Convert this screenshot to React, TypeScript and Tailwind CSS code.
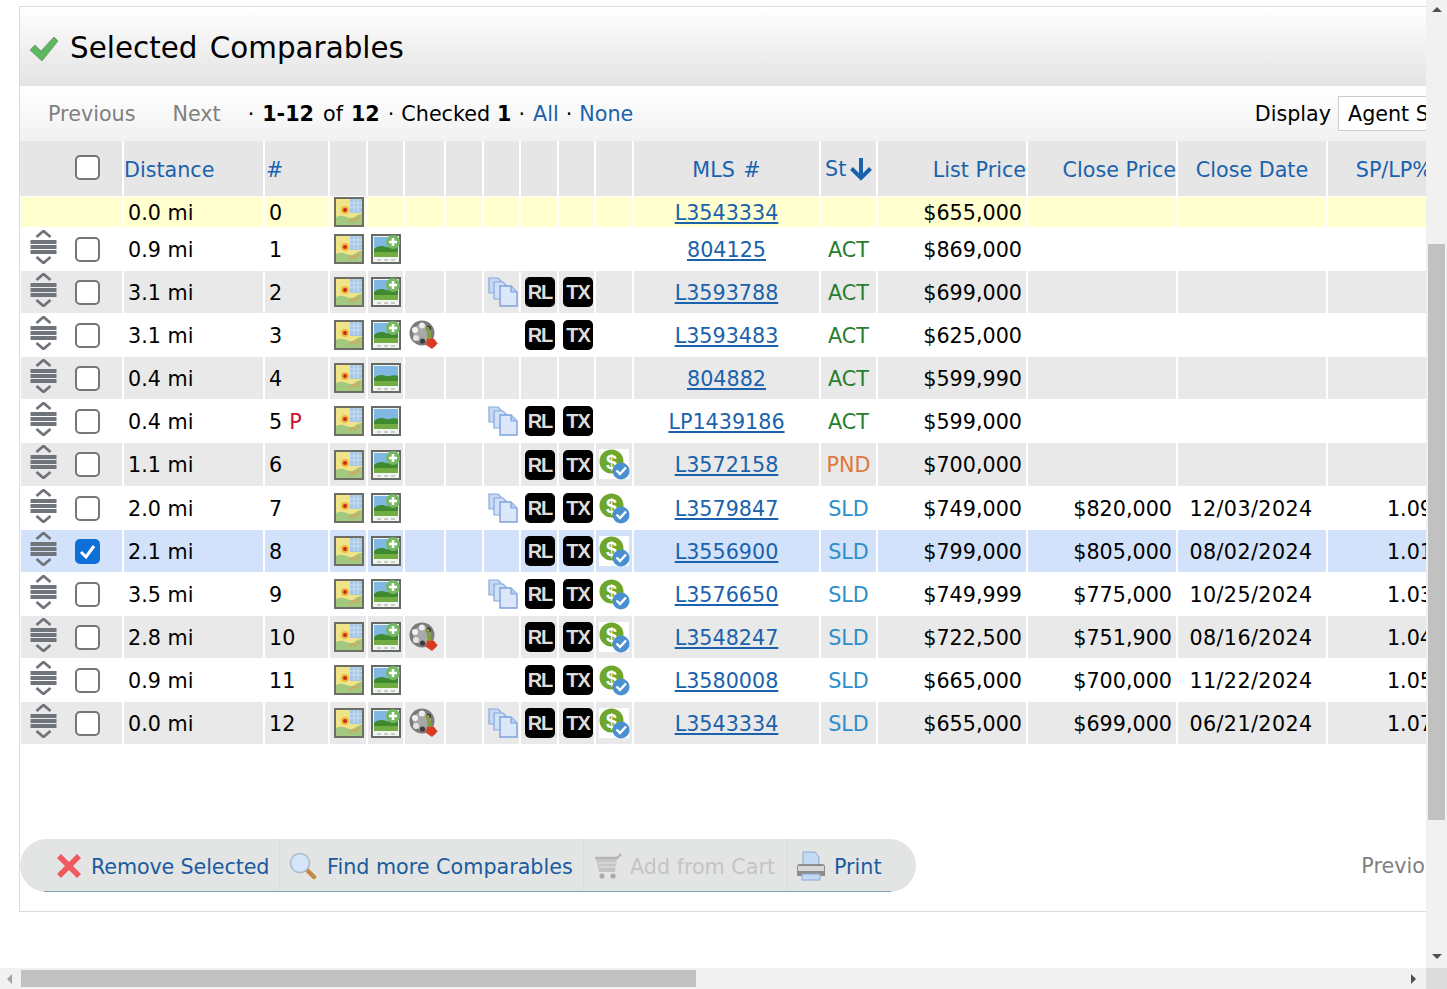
const cols = "grid grid-cols-[102px_139px_63px_36px_35px_39px_36px_35px_36px_35px_36px_185px_55px_148px_148px_148px_112px_80px] gap-x-[2px]";

const PhotoIcon = () => (
  <svg width="30" height="30" viewBox="0 0 30 30" className="block">
    <rect x="1" y="1" width="28" height="28" fill="#f0e488" stroke="#6e6e64" strokeWidth="2" />
    <rect x="16" y="2" width="12" height="14" fill="#a5c8e8" />
    <path d="M16 6h12M16 10h12M20 2v13M24 2v13" stroke="#cfe0ef" strokeWidth="1" />
    <path d="M2 20c6-3 10 0 14 1s8-5 12-4v11H2z" fill="#a3c980" />
    <path d="M15 25l4-3 2 2 3-4 2 2" stroke="#d9a25a" strokeWidth="1.5" fill="none" />
    <circle cx="11" cy="13" r="4" fill="#f2b53a" />
    <circle cx="11" cy="13" r="2" fill="#c02a1c" />
  </svg>
);

const LandscapeIcon = ({ plus }: { plus?: boolean }) => (
  <svg width="30" height="30" viewBox="0 0 30 30" className="block">
    <rect x="1" y="1" width="28" height="28" fill="#f1f5ef" stroke="#666a66" strokeWidth="2" />
    <rect x="3" y="3" width="24" height="12" fill="#7fb8e2" />
    <path d="M3 15c5-4 9-3 12-2s7-2 12 0v10H3z" fill="#3f8a2e" />
    <rect x="3" y="18" width="24" height="5" fill="#72ad44" />
    <path d="M6 26h4M13 26h4M20 26h4" stroke="#a0a8a0" strokeWidth="1" />
    {plus && (
      <>
        <circle cx="22" cy="8" r="7" fill="#74b862" />
        <path d="M22 4v8M18 8h8" stroke="#fff" strokeWidth="2.6" />
      </>
    )}
  </svg>
);

const FilmIcon = () => (
  <svg width="31" height="30" viewBox="0 0 31 30" className="block">
    <circle cx="13" cy="13" r="12.5" fill="#7b7b7b" />
    <circle cx="13" cy="13" r="9" fill="#a8a8a8" />
    <circle cx="13" cy="5.5" r="3" fill="#ececec" />
    <circle cx="6" cy="10" r="3" fill="#f2f2f2" />
    <circle cx="7" cy="18" r="3" fill="#e4e4e4" />
    <circle cx="13.5" cy="21" r="2.6" fill="#3c3c3c" />
    <circle cx="19.5" cy="8" r="2.6" fill="#3c3c3c" />
    <path d="M17 7l2 13 4-1-3-12z" fill="#84a03c" />
    <path d="M18 18l11 5-6 6-6-4z" fill="#e2412a" />
    <circle cx="23" cy="23" r="4.4" fill="#d93a22" />
  </svg>
);

const DocsIcon = () => (
  <svg width="31" height="30" viewBox="0 0 31 30" className="block">
    <path d="M1 1h9l3 3v12H1z" fill="#c5d9f5" stroke="#86a9dd" strokeWidth="1.2" />
    <path d="M6 5h9l4 4v13H6z" fill="#cfe0f7" stroke="#86a9dd" strokeWidth="1.2" />
    <path d="M12 9h11l6 6v14H12z" fill="#dce8fa" stroke="#7ba2dc" strokeWidth="1.4" />
    <path d="M23 9v6h6" fill="#b4cdf0" stroke="#7ba2dc" strokeWidth="1.2" />
  </svg>
);

const Badge = ({ text }: { text: string }) => (
  <div className="flex h-[30px] w-[30px] items-center justify-center rounded-[5px] bg-black text-[20px] font-bold leading-none tracking-[-1px] text-[#dddddd] [font-family:'Liberation_Sans',sans-serif]">
    {text}
  </div>
);

const DollarIcon = () => (
  <svg width="31" height="31" viewBox="0 0 31 31" className="block">
    <rect x="0" y="0" width="30" height="30" fill="#fff" />
    <circle cx="12.5" cy="12.5" r="12" fill="#6ea72c" />
    <text x="12.5" y="19.5" textAnchor="middle" fontSize="20" fontWeight="700" fill="#fff" fontFamily="Liberation Sans, sans-serif">$</text>
    <circle cx="22" cy="22" r="8.5" fill="#4a90d0" />
    <path d="M17.5 21.5l3.5 3.5 6-6.5" fill="none" stroke="#fff" strokeWidth="2.4" />
  </svg>
);

const DragIcon = () => (
  <svg width="27" height="34" viewBox="0 0 27 34" className="block">
    <path d="M6.5 7l7-6 7 6" fill="none" stroke="#6f747a" strokeWidth="2.8" />
    <rect x="0.5" y="10" width="26" height="4" fill="#70757b" />
    <rect x="0.5" y="15" width="26" height="4" fill="#70757b" />
    <rect x="0.5" y="20" width="26" height="4" fill="#70757b" />
    <path d="M6.5 27l7 6 7-6" fill="none" stroke="#6f747a" strokeWidth="2.8" />
  </svg>
);

const SortArrow = () => (
  <svg width="24" height="24" viewBox="0 0 24 24" className="-mt-[2px] ml-[3px] block">
    <path d="M12 1v20M2.5 11.5l9.5 9.5 9.5-9.5" fill="none" stroke="#1a62ad" strokeWidth="4" />
  </svg>
);

const Checkbox = ({ checked }: { checked?: boolean }) => (
  <span className="relative block h-[25px] w-[25px]">
    <input
      type="checkbox"
      checked={!!checked}
      readOnly
      className="block h-[25px] w-[25px] appearance-none rounded-[5px] border-2 border-[#767676] bg-white checked:border-[#0d6fd8] checked:bg-[#0d6fd8]"
    />
    {checked && (
      <svg width="25" height="25" viewBox="0 0 25 25" className="absolute left-0 top-0">
        <path d="M6 13l5 5 8-11" fill="none" stroke="#fff" strokeWidth="3" />
      </svg>
    )}
  </span>
);

const rows = [
  { d: "0.9 mi", n: "1", plus: true, mls: "804125", st: "ACT", list: "$869,000" },
  { d: "3.1 mi", n: "2", plus: true, docs: true, badges: true, mls: "L3593788", st: "ACT", list: "$699,000" },
  { d: "3.1 mi", n: "3", plus: true, film: true, badges: true, mls: "L3593483", st: "ACT", list: "$625,000" },
  { d: "0.4 mi", n: "4", mls: "804882", st: "ACT", list: "$599,990" },
  { d: "0.4 mi", n: "5", p: true, docs: true, badges: true, mls: "LP1439186", st: "ACT", list: "$599,000" },
  { d: "1.1 mi", n: "6", plus: true, badges: true, money: true, mls: "L3572158", st: "PND", list: "$700,000" },
  { d: "2.0 mi", n: "7", plus: true, docs: true, badges: true, money: true, mls: "L3579847", st: "SLD", list: "$749,000", close: "$820,000", date: "12/03/2024", sp: "1.09" },
  { d: "2.1 mi", n: "8", plus: true, badges: true, money: true, checked: true, mls: "L3556900", st: "SLD", list: "$799,000", close: "$805,000", date: "08/02/2024", sp: "1.01" },
  { d: "3.5 mi", n: "9", plus: true, docs: true, badges: true, money: true, mls: "L3576650", st: "SLD", list: "$749,999", close: "$775,000", date: "10/25/2024", sp: "1.03" },
  { d: "2.8 mi", n: "10", plus: true, film: true, badges: true, money: true, mls: "L3548247", st: "SLD", list: "$722,500", close: "$751,900", date: "08/16/2024", sp: "1.04" },
  { d: "0.9 mi", n: "11", plus: true, badges: true, money: true, mls: "L3580008", st: "SLD", list: "$665,000", close: "$700,000", date: "11/22/2024", sp: "1.05" },
  { d: "0.0 mi", n: "12", plus: true, film: true, docs: true, badges: true, money: true, mls: "L3543334", st: "SLD", list: "$655,000", close: "$699,000", date: "06/21/2024", sp: "1.07" },
];

type Row = (typeof rows)[number] & { p?: boolean; film?: boolean; docs?: boolean; badges?: boolean; money?: boolean; checked?: boolean; close?: string; date?: string; sp?: string };

const stColor: Record<string, string> = {
  ACT: "text-[#2a7d2e]",
  PND: "text-[#e0763a]",
  SLD: "text-[#2b8fc9]",
};

const DataRow = ({ row, index }: { row: Row; index: number }) => {
  const bg = row.checked ? "bg-[#d3e2fb]" : index % 2 === 0 ? "bg-white" : "bg-[#e9e9e9]";
  const h = row.n === "6" ? "h-[43px]" : "h-[42px]";
  const cell = `${bg} ${h} flex items-center pt-[2px]`;
  const icon = `${bg} ${h} flex items-center pl-[4px]`;
  return (
    <div className={cols}>
      <div className={`${bg} ${h} ml-[1px] flex items-center pl-[9px]`}>
        <div className="-mt-[5px]"><DragIcon /></div>
        <div className="ml-[18px]"><Checkbox checked={row.checked} /></div>
      </div>
      <div className={`${cell} pl-[4px]`}>{row.d}</div>
      <div className={`${cell} pl-[4px]`}>
        {row.n}
        {row.p && <span className="ml-[7px] text-[#c8102e]">P</span>}
      </div>
      <div className={icon}><PhotoIcon /></div>
      <div className={`${bg} ${h} flex items-center pl-[3px]`}><LandscapeIcon plus={row.plus} /></div>
      <div className={icon}>{row.film && <FilmIcon />}</div>
      <div className={icon} />
      <div className={icon}>{row.docs && <DocsIcon />}</div>
      <div className={icon}>{row.badges && <Badge text="RL" />}</div>
      <div className={icon}>{row.badges && <Badge text="TX" />}</div>
      <div className={`${bg} ${h} flex items-center pl-[3px]`}>{row.money && <DollarIcon />}</div>
      <div className={`${cell} justify-center`}>
        <span className="text-[#1a62ad] underline">{row.mls}</span>
      </div>
      <div className={`${cell} justify-center ${stColor[row.st]}`}>{row.st}</div>
      <div className={`${cell} justify-end pr-[4px]`}>{row.list}</div>
      <div className={`${cell} justify-end pr-[4px]`}>{row.close}</div>
      <div className={`${cell} justify-center pr-[2px] tracking-[0.4px]`}>{row.date}</div>
      <div className={`${cell} justify-end pr-[7px]`}>{row.sp}</div>
      <div className={cell} />
    </div>
  );
};

const RemoveIcon = () => (
  <svg width="26" height="26" viewBox="0 0 26 26" className="block">
    <path d="M5 1l8 8 8-8 4 4-8 8 8 8-4 4-8-8-8 8-4-4 8-8-8-8z" fill="#ef5a5f" />
  </svg>
);

const SearchIcon = () => (
  <svg width="28" height="28" viewBox="0 0 28 28" className="block">
    <path d="M17 17l8 8" stroke="#c08a45" strokeWidth="4.5" strokeLinecap="round" />
    <circle cx="11" cy="11" r="9.5" fill="#d4e6f8" stroke="#a9bccf" strokeWidth="1.6" />
  </svg>
);

const CartIcon = () => (
  <svg width="30" height="28" viewBox="0 0 30 28" className="block">
    <path d="M2 6h22l4-4" fill="none" stroke="#b5b5b5" strokeWidth="2.4" />
    <path d="M3 7h21l-2 13H6z" fill="#c4c4c4" />
    <path d="M5 11h18M6 15h17" stroke="#e5e5e5" strokeWidth="1.2" />
    <circle cx="9" cy="24" r="2.6" fill="#a9a9a9" />
    <circle cx="20" cy="24" r="2.6" fill="#a9a9a9" />
  </svg>
);

const PrintIcon = () => (
  <svg width="30" height="30" viewBox="0 0 30 30" className="block">
    <path d="M7 1h12l4 5v10H7z" fill="#c3daf4" stroke="#8aa9cc" strokeWidth="1" />
    <path d="M4 13h22a3 3 0 0 1 3 3v9H1v-9a3 3 0 0 1 3-3z" fill="#8c8c8c" />
    <rect x="2" y="15" width="26" height="5" fill="#d8d8d8" />
    <rect x="6" y="23" width="18" height="6" fill="#c3daf4" stroke="#8aa9cc" strokeWidth="1" />
  </svg>
);

const ActionBar = () => (
  <div className="relative flex h-[53px] w-[896px] items-center rounded-full bg-[#e3e4e4] text-[#1a5c9e]">
    <div className="flex h-full w-[260px] items-center border-r border-[#dadada] pl-[36px]">
      <RemoveIcon />
      <span className="ml-[9px] pt-[3px] tracking-[-0.13px]">Remove Selected</span>
    </div>
    <div className="flex h-full w-[304px] items-center border-r border-[#dadada] pl-[9px]">
      <SearchIcon />
      <span className="ml-[10px] pt-[3px]">Find more Comparables</span>
    </div>
    <div className="flex h-full w-[204px] items-center border-r border-[#dadada] pl-[9px] text-[#c4c4c4]">
      <CartIcon />
      <span className="ml-[7px] pt-[3px]">Add from Cart</span>
    </div>
    <div className="flex h-full items-center pl-[8px]">
      <PrintIcon />
      <span className="ml-[8px] pt-[3px]">Print</span>
    </div>
    <div className="absolute bottom-0 left-[24px] h-px w-[847px] bg-[#7ba2c2]" />
  </div>
);

export default function App() {
  return (
    <div className="grid h-screen grid-cols-[1fr_21px] grid-rows-[1fr_21px] overflow-hidden bg-white text-[20.7px] leading-none text-black [font-family:'DejaVu_Sans',sans-serif]">
      <div className="overflow-hidden pl-[19px] pt-[6px]">
        <div className="h-[906px] w-[1562px] border border-[#dcdcdc]">
          <div className="flex h-[79px] items-center bg-gradient-to-b from-white to-[#e3e3e3] pl-[9px] pt-[4px]">
            <svg width="30" height="26" viewBox="0 0 30 26" className="block">
              <path d="M1 14l5-5 6 6L25 1l4 4-16 20z" fill="#5cb85c" stroke="#7d9e7d" strokeWidth="1" />
            </svg>
            <h1 className="ml-[11px] text-[29.4px] font-normal [word-spacing:3px]">Selected Comparables</h1>
          </div>
          <div className="flex h-[55px] items-center bg-gradient-to-b from-white to-[#f1f1f1] pl-[28px] pt-[2px]">
            <span className="text-[#808080]">Previous</span>
            <span className="ml-[37px] text-[#808080]">Next</span>
            <span className="ml-[27px]">·</span>
            <span className="ml-[8px] font-bold">1-12</span>
            <span className="ml-[9px]">of</span>
            <span className="ml-[8px] font-bold">12</span>
            <span className="ml-[8px]">·</span>
            <span className="ml-[7px]">Checked</span>
            <span className="ml-[7px] font-bold">1</span>
            <span className="ml-[7px]">·</span>
            <span className="ml-[8px] text-[#1a62ad]">All</span>
            <span className="ml-[7px]">·</span>
            <span className="ml-[7px] text-[#1a62ad]">None</span>
            <span className="ml-auto">Display</span>
            <div className="-mt-[2px] ml-[7px] mr-[20px] flex h-[35px] w-[222px] items-center border border-[#cccccc] bg-white pl-[9px] pt-[2px]">Agent Summary</div>
          </div>
          <div className={`${cols} text-[#1a62ad]`}>
            <div className="flex h-[55px] items-center bg-[#e6e6e6] pb-[3px] pl-[55px]">
              <Checkbox />
            </div>
            <div className="flex h-[55px] items-center bg-[#e6e6e6] pt-[4px]">Distance</div>
            <div className="flex h-[55px] items-center bg-[#e6e6e6] pl-[1px] pt-[4px]">#</div>
            <div className="h-[55px] bg-[#e6e6e6]" />
            <div className="h-[55px] bg-[#e6e6e6]" />
            <div className="h-[55px] bg-[#e6e6e6]" />
            <div className="h-[55px] bg-[#e6e6e6]" />
            <div className="h-[55px] bg-[#e6e6e6]" />
            <div className="h-[55px] bg-[#e6e6e6]" />
            <div className="h-[55px] bg-[#e6e6e6]" />
            <div className="h-[55px] bg-[#e6e6e6]" />
            <div className="flex h-[55px] items-center justify-center bg-[#e6e6e6] pt-[4px] [word-spacing:2px]">MLS #</div>
            <div className="flex h-[55px] items-center bg-[#e6e6e6] pl-[4px] pt-[2px]">St<SortArrow /></div>
            <div className="flex h-[55px] items-center justify-end bg-[#e6e6e6] pt-[4px]">List Price</div>
            <div className="flex h-[55px] items-center justify-end bg-[#e6e6e6] pt-[4px]">Close Price</div>
            <div className="flex h-[55px] items-center justify-center bg-[#e6e6e6] pt-[4px]">Close Date</div>
            <div className="flex h-[55px] items-center justify-end bg-[#e6e6e6] pr-[8px] pt-[4px]">SP/LP%</div>
            <div className="h-[55px] bg-[#e6e6e6]" />
          </div>
          <div className={`${cols} mt-[1px]`}>
            <div className="ml-[1px] h-[30px] bg-[#ffffcf]" />
            <div className="flex h-[30px] items-center bg-[#ffffcf] pl-[4px] pt-[2px]">0.0 mi</div>
            <div className="flex h-[30px] items-center bg-[#ffffcf] pl-[4px] pt-[2px]">0</div>
            <div className="flex h-[30px] items-center bg-[#ffffcf] pl-[4px]"><PhotoIcon /></div>
            <div className="h-[30px] bg-[#ffffcf]" />
            <div className="h-[30px] bg-[#ffffcf]" />
            <div className="h-[30px] bg-[#ffffcf]" />
            <div className="h-[30px] bg-[#ffffcf]" />
            <div className="h-[30px] bg-[#ffffcf]" />
            <div className="h-[30px] bg-[#ffffcf]" />
            <div className="h-[30px] bg-[#ffffcf]" />
            <div className="flex h-[30px] items-center justify-center bg-[#ffffcf] pt-[2px]">
              <span className="text-[#1a62ad] underline">L3543334</span>
            </div>
            <div className="h-[30px] bg-[#ffffcf]" />
            <div className="flex h-[30px] items-center justify-end bg-[#ffffcf] pr-[4px] pt-[2px]">$655,000</div>
            <div className="h-[30px] bg-[#ffffcf]" />
            <div className="h-[30px] bg-[#ffffcf]" />
            <div className="h-[30px] bg-[#ffffcf]" />
            <div className="h-[30px] bg-[#ffffcf]" />
          </div>
          <div className="mt-[1px] flex flex-col gap-y-[1px]">
            {rows.map((row, i) => (
              <DataRow key={row.n} row={row} index={i} />
            ))}
          </div>
          <div className="mt-[95px] flex items-center">
            <ActionBar />
            <span className="ml-auto mr-[63px] pt-[1px] text-[#808080]">Previous</span>
            <span className="mr-[20px] pt-[1px] text-[#808080]">Next</span>
          </div>
        </div>
      </div>
      <div className="flex flex-col items-center bg-[#f1f1f1] pt-[7px]">
        <div className="h-0 w-0 border-x-[5px] border-b-[5px] border-x-transparent border-b-[#505050]" />
        <div className="mt-[232px] h-[576px] w-[17px] bg-[#c1c1c1]" />
        <div className="mb-[9px] mt-auto h-0 w-0 border-x-[5px] border-t-[5px] border-x-transparent border-t-[#505050]" />
      </div>
      <div className="flex items-center bg-[#f1f1f1] pl-[7px] pr-[10px]">
        <div className="h-0 w-0 border-y-[5px] border-r-[5px] border-y-transparent border-r-[#a3a3a3]" />
        <div className="ml-[9px] h-[17px] w-[675px] bg-[#c1c1c1]" />
        <div className="ml-auto h-0 w-0 border-y-[5px] border-l-[5px] border-y-transparent border-l-[#505050]" />
      </div>
      <div className="bg-[#dcdcdc]" />
    </div>
  );
}
